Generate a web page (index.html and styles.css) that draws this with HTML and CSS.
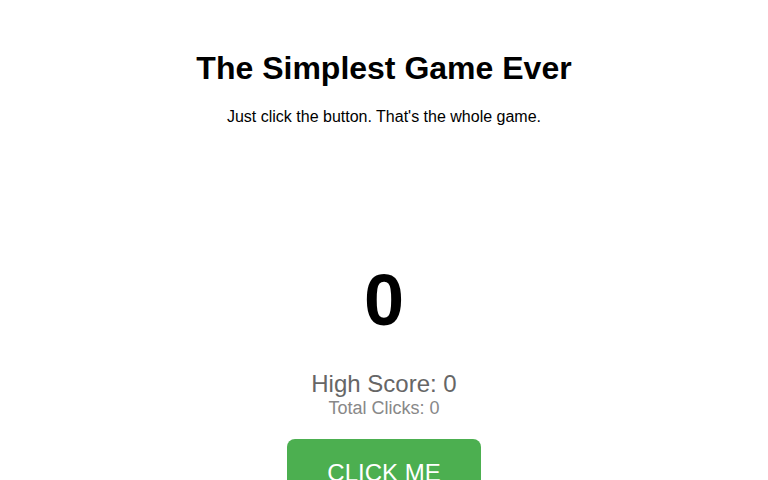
FILE: index.html
```html
<!DOCTYPE html>
<html lang="en">
<head>
  <meta charset="UTF-8" />
  <meta name="viewport" content="width=device-width, initial-scale=1.0"/>
  <title>The Simplest Game Ever</title>
  <link rel="stylesheet" href="styles.css">
</head>
<body>
  <div class="container">
    <h1>The Simplest Game Ever</h1>
    <p class="subtitle">Just click the button. That's the whole game.</p>

    <div class="game">
      <div class="score" id="score">0</div>
      <div class="high-score">High Score: <span id="highScore">0</span></div>
      <div class="total-clicks">Total Clicks: <span id="totalClicks">0</span></div>
      <button class="click-btn" id="clickBtn">CLICK ME</button>
    </div>
  </div>

  <script>
    const scoreEl = document.getElementById('score');
    const highScoreEl = document.getElementById('highScore');
    const totalClicksEl = document.getElementById('totalClicks');
    const clickBtn = document.getElementById('clickBtn');
    let score = 0;

    clickBtn.onclick = () => {
      score++;
      scoreEl.textContent = score;
      totalClicksEl.textContent = Number(totalClicksEl.textContent) + 1;
      if (score > Number(highScoreEl.textContent)) {
        highScoreEl.textContent = score;
      }
    };
  </script>
</body>
</html>
```

FILE: styles.css
```css
* {
  box-sizing: border-box;
}

body {
  margin: 0;
  padding: 29px 20px 20px;
  font-family: "Liberation Sans", Arial, sans-serif;
  color: #000;
  background: #fff;
  text-align: center;
}

.container {
  max-width: 800px;
  margin: 0 auto;
}

h1 {
  font-size: 32px;
  margin: 21px 0;
}

.subtitle {
  font-size: 16px;
  margin: 21px 0 0;
}

.game {
  margin-top: 133px;
  display: flex;
  flex-direction: column;
  align-items: center;
}

.score {
  font-size: 72px;
  font-weight: bold;
  margin-bottom: 29px;
}

.high-score {
  font-size: 24px;
  color: #666;
}

.total-clicks {
  font-size: 18px;
  color: #888;
  margin-bottom: 20px;
}

.click-btn {
  font-family: inherit;
  font-size: 24px;
  padding: 20px 40px;
  border: none;
  border-radius: 8px;
  background: #4caf50;
  color: #fff;
  cursor: pointer;
}

.click-btn:hover {
  background: #45a049;
}
```
